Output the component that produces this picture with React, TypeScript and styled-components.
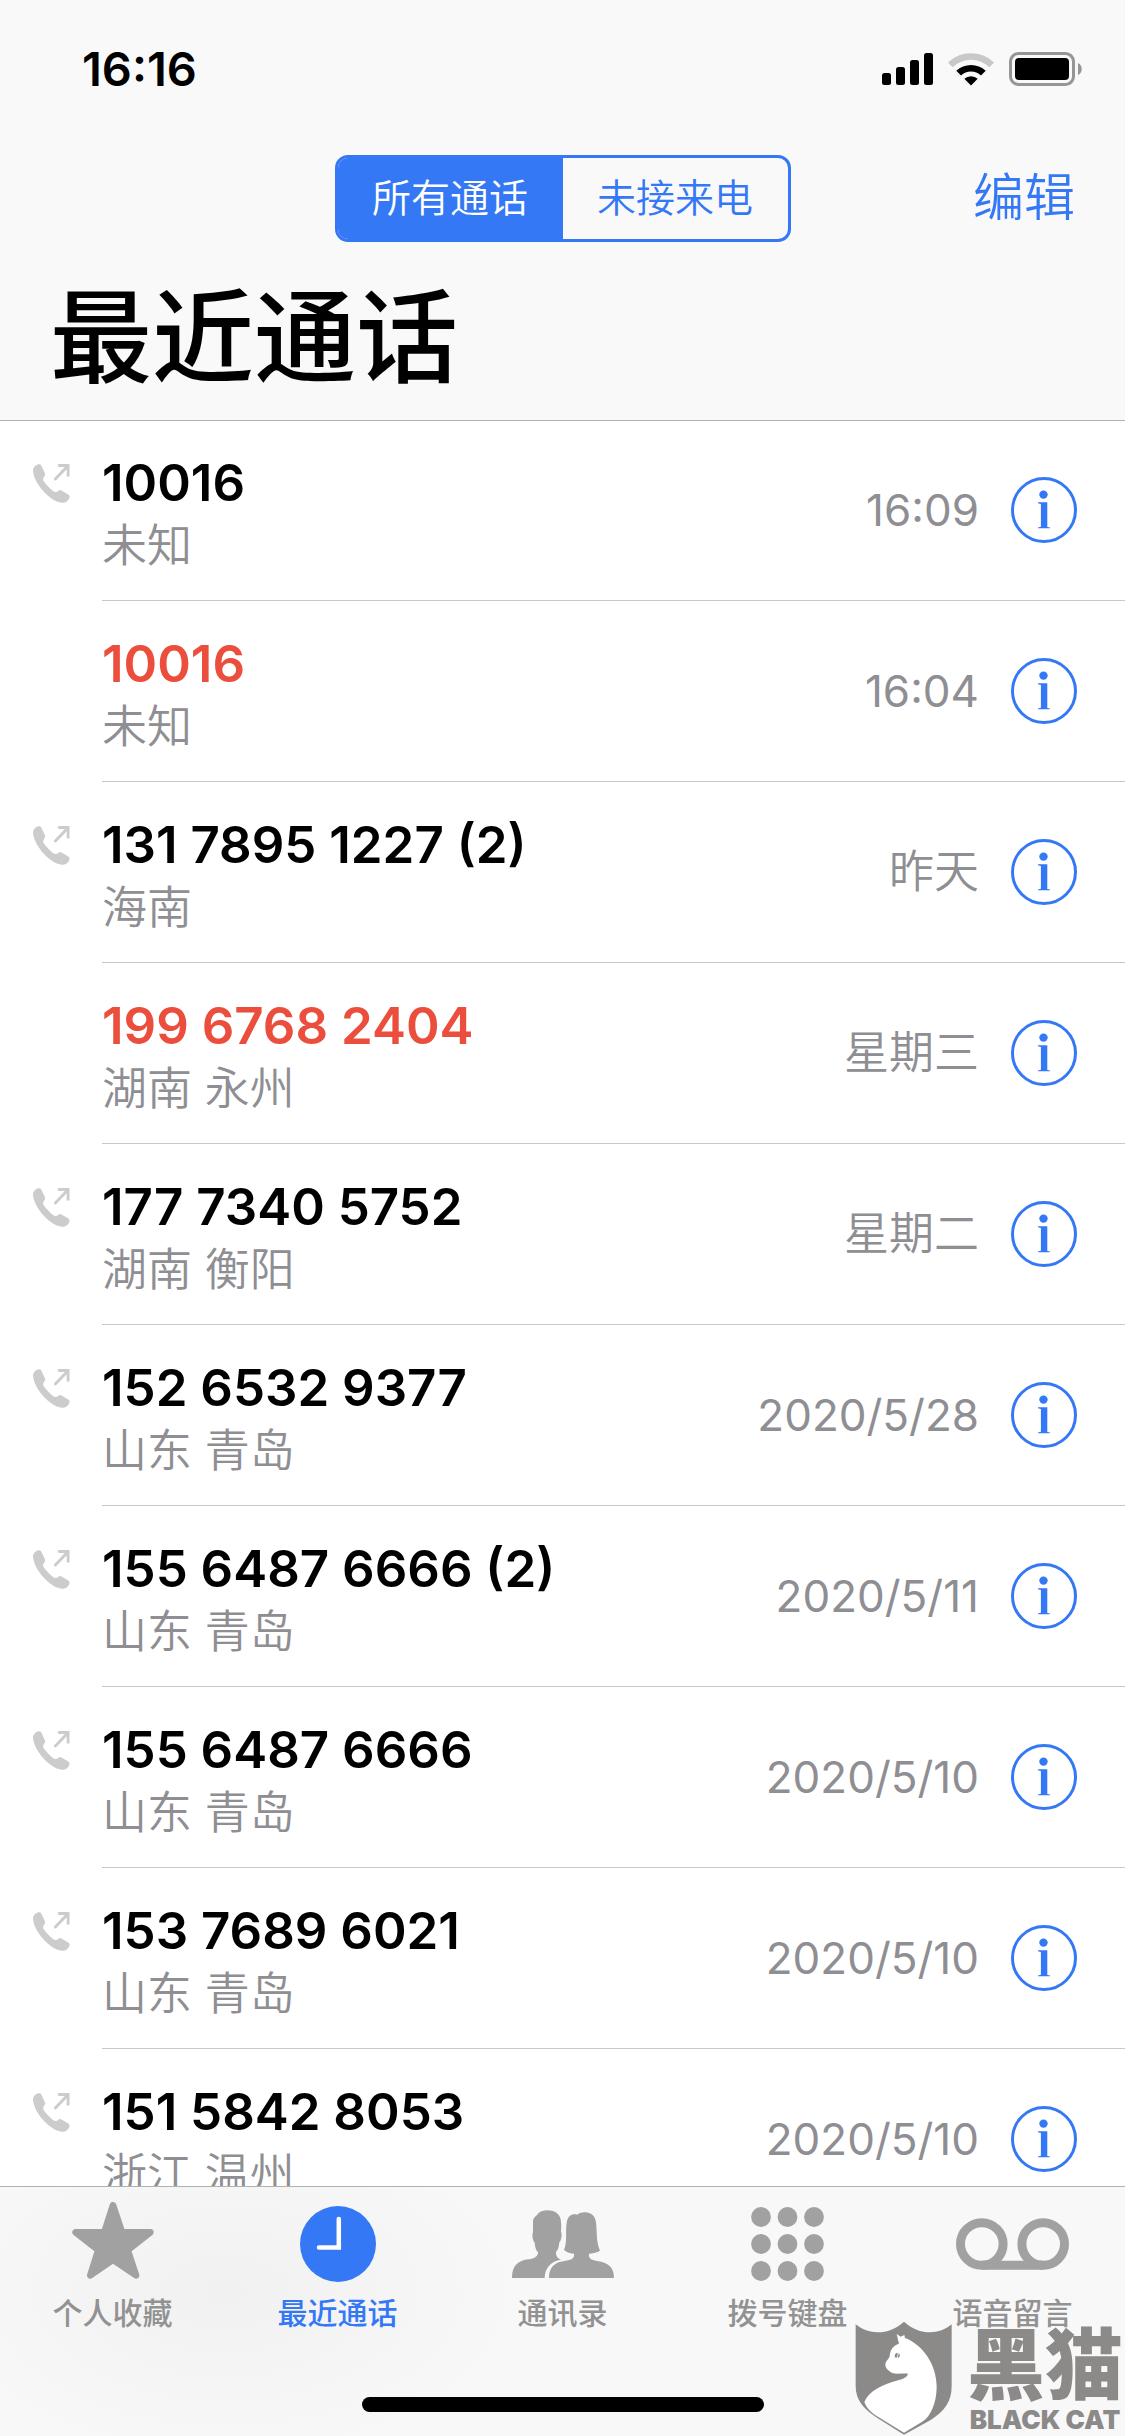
import React, { useState } from 'react';
import styled, { createGlobalStyle } from 'styled-components';

const BLUE = '#3478f6';
const GREY = '#8e8e93';
const TAB_GREY = '#929292';
const ICON_GREY = '#a1a1a1';

const GlobalStyle = createGlobalStyle`
  * { box-sizing: border-box; }
  body {
    margin: 0;
    background: #fff;
    font-family: Inter, "Noto Sans CJK SC", sans-serif;
    -webkit-font-smoothing: antialiased;
  }
  button { font: inherit; padding: 0; margin: 0; border: 0; background: none; color: inherit; cursor: pointer; }
`;

const Screen = styled.div`
  position: relative;
  display: flex;
  flex-direction: column;
  height: 100vh;
  overflow: hidden;
`;

const Header = styled.header`
  position: relative;
  display: flex;
  flex-direction: column;
  background: #f9f9f9;
  box-shadow: 0 1px 0 #b2b2b2;
`;

const StatusBar = styled.div`
  display: flex;
  align-items: center;
  justify-content: space-between;
  height: 138px;
  padding: 0 43px 0 82px;
`;

const Clock = styled.time`
  font-size: 47px;
  font-weight: 600;
  line-height: 54px;
`;

const StatusIcons = styled.div`
  display: flex;
  align-items: center;
  gap: 15px;
`;

const NavBar = styled.div`
  display: grid;
  grid-template-columns: 1fr auto 1fr;
  align-items: center;
  height: 120px;
  padding: 0 50px;
`;

const Segmented = styled.div`
  grid-column: 2;
  display: flex;
  width: 456px;
  height: 87px;
  border: 3px solid ${BLUE};
  border-radius: 13px;
  overflow: hidden;
`;

const Segment = styled.button<{ $active: boolean }>`
  flex: 1;
  && {
    font-size: 39px;
    font-weight: 350;
    line-height: 48px;
    color: ${p => (p.$active ? '#fff' : BLUE)};
    background: ${p => (p.$active ? BLUE : 'transparent')};
  }
`;

const EditButton = styled.button`
  justify-self: end;
  && {
    font-size: 51px;
    font-weight: 350;
    line-height: 60px;
    color: ${BLUE};
  }
`;

const Title = styled.h1`
  margin: 0;
  padding: 20px 50px 22px;
  font-size: 102px;
  font-weight: 500;
  line-height: 120px;
`;

const CallList = styled.ul`
  flex: 1;
  min-height: 0;
  margin: 0;
  padding: 0;
  list-style: none;
  overflow-y: auto;
  scrollbar-width: none;
`;

const Row = styled.li`
  display: flex;
  height: 181px;
`;

const Direction = styled.div`
  flex: none;
  width: 102px;
  padding: 44px 0 0 33px;
`;

const RowBody = styled.div`
  flex: 1;
  display: flex;
  align-items: center;
  border-bottom: 1px solid #c8c7cc;
  padding-right: 48px;
`;

const Caller = styled.div`
  flex: 1;
  min-width: 0;
  padding-top: 12px;
`;

const Phone = styled.div<{ $missed?: boolean }>`
  font-size: 51px;
  font-weight: 600;
  line-height: 60px;
  color: ${p => (p.$missed ? '#eb4e3d' : '#000')};
`;

const Place = styled.div`
  font-size: 45px;
  font-weight: 350;
  line-height: 66px;
  color: ${GREY};
`;

const When = styled.time<{ $numeric: boolean }>`
  margin-right: 32px;
  font-size: ${p => (p.$numeric ? 44 : 45)}px;
  font-weight: ${p => (p.$numeric ? 400 : 350)};
  line-height: 54px;
  color: ${GREY};
`;

const InfoButton = styled.button`
  display: flex;
`;

const TabBar = styled.nav`
  display: flex;
  flex: none;
  position: relative;
  height: 250px;
  border-top: 1px solid #b2b2b2;
  background:
    radial-gradient(ellipse 300px 170px at 20% 42%, #f1f1f1, rgba(241, 241, 241, 0)),
    #f8f8f8;
`;

const Tab = styled.button<{ $active: boolean }>`
  flex: 1;
  display: flex;
  flex-direction: column;
  align-items: center;
  height: 150px;
  && {
    font-size: 30px;
    font-weight: 500;
    line-height: 36px;
    color: ${p => (p.$active ? BLUE : TAB_GREY)};
  }
`;

const TabIcon = styled.span<{ $active: boolean }>`
  display: flex;
  align-items: center;
  justify-content: center;
  height: 108px;
  padding-top: 6px;
  color: ${p => (p.$active ? BLUE : ICON_GREY)};
`;

const HomeIndicator = styled.div`
  position: absolute;
  left: 50%;
  bottom: 24px;
  width: 402px;
  height: 15px;
  border-radius: 8px;
  background: #000;
  transform: translateX(-50%);
`;

const Watermark = styled.div`
  position: absolute;
  right: 2px;
  bottom: 0;
  display: flex;
  gap: 14px;
  color: #8c8989;
  pointer-events: none;
`;

const WatermarkText = styled.div`
  display: flex;
  flex-direction: column;
  align-items: center;
  gap: 8px;
`;

const WatermarkName = styled.span`
  font-family: "Noto Sans CJK SC", sans-serif;
  font-size: 78px;
  font-weight: 900;
  line-height: 78px;
`;

const WatermarkLatin = styled.span`
  font-size: 26px;
  font-weight: 900;
  line-height: 26px;
  white-space: nowrap;
`;

const SignalIcon = () => (
  <svg width="51" height="34" viewBox="0 0 51 34" aria-hidden="true">
    <rect x="0" y="21" width="9" height="12" rx="2.5" />
    <rect x="14" y="15" width="9" height="18" rx="2.5" />
    <rect x="28" y="8" width="9" height="25" rx="2.5" />
    <rect x="42" y="1" width="9" height="32" rx="2.5" />
  </svg>
);

const WifiIcon = () => (
  <svg width="46" height="34" viewBox="0 0 46 34" aria-hidden="true">
    <path d="M0 10.5a33 33 0 0 1 46 0l-4.600 4.700a26.500 26.500 0 0 0-36.800 0z" fill="#c8c8c8" />
    <path d="M8.300 18.800a21.200 21.200 0 0 1 29.400 0l-4.700 4.700a14.600 14.600 0 0 0-20 0z" />
    <path d="M16.300 26.800a9.800 9.800 0 0 1 13.400 0L23 33.500z" />
  </svg>
);

const BatteryIcon = () => (
  <svg width="73" height="34" viewBox="0 0 73 34" aria-hidden="true">
    <rect x="1.500" y="1.500" width="63" height="31" rx="8" fill="none" stroke="#969696" strokeWidth="3" />
    <rect x="6" y="6" width="54" height="22" rx="4" />
    <path d="M69 11c5 2 5 10 0 12z" fill="#969696" />
  </svg>
);

const OutgoingIcon = () => (
  <svg width="37" height="39" viewBox="0 0 37 39" fill="#ccc" role="img" aria-label="呼出">
    <path d="M5.500.3C3 .8.100 3.200 0 6.500.200 13 5.500 23 13.500 30.500 20 36.500 26 38.800 30 38.800c3.500 0 6.500-3 6.500-6.200 0-1-.4-1.500-1.200-2L28.500 26.400c-1.200-.7-2.200-.4-3 .4-1.600 1.600-3.600 1.700-5.200.5-3.600-2.800-6.800-6.300-9.600-10-.9-1.400-.7-3 .4-4.500 1-1.400 1.500-2.200.7-3.800L8.300 1.500C7.600.400 6.800 0 5.500.300z" />
    <path d="M26.200 0h10.300v12.600h-2.800V5.200L23.400 16c-1.500 1.300-3.400-.5-2.100-2L31.800 2.900h-5.600c-1.800 0-1.800-2.900 0-2.900z" />
  </svg>
);

const InfoIcon = () => (
  <svg width="66" height="66" viewBox="0 0 66 66" fill={BLUE} aria-hidden="true">
    <circle cx="33" cy="33" r="31.500" fill="none" stroke={BLUE} strokeWidth="3" />
    <circle cx="32.500" cy="17.600" r="4.200" />
    <path d="M27 25.300h9.300v24.600l2.700.5V51.300H27v-.9l2.900-.7V27l-2.900-.7z" />
  </svg>
);

const StarIcon = () => (
  <svg width="82" height="84" viewBox="33 36 246 252" fill="currentColor" stroke="currentColor" strokeWidth="20" strokeLinejoin="round" aria-hidden="true">
    <path d="M156 46 183 127H268L200 180 225 256 156 209 88 256 112 180 44 127H130z" />
  </svg>
);

const ClockIcon = () => (
  <svg width="76" height="76" viewBox="0 0 76 76" aria-hidden="true">
    <circle cx="38" cy="38" r="38" fill="currentColor" />
    <path d="M38.800 13v28.500H19" fill="none" stroke="#fff" strokeWidth="4.500" strokeLinecap="round" />
  </svg>
);

const PeopleIcon = () => (
  <svg width="102" height="68" viewBox="33 57 306 204" fill="currentColor" aria-hidden="true">
    <path d="M33 261C33 225 50 208 84 205C100 203 112 195 111 183C104 178 102 165 101 155C95 150 92 130 96 124L96 90C98 78 106 76 112 67C122 56 150 55 166 65C180 74 182 92 180 122C184 128 181 150 175 154C174 166 171 178 165 183C164 196 170 202 180 206C150 210 131 232 131 261Z" />
    <path d="M144 261C144 232 158 214 190 210C212 206 221 202 219 188C205 187 195 183 189 176C200 155 192 115 198 90C202 74 214 66 229 71C244 58 272 64 280 78C292 98 281 145 297 179C288 184 276 187 264 188C262 202 270 206 288 210C325 215 339 232 339 261Z" />
  </svg>
);

const KeypadIcon = () => (
  <svg width="73" height="78" viewBox="0 0 73 78" fill="currentColor" aria-hidden="true">
    {[12, 39, 66].map(y => [10, 36.500, 63].map(x => <circle key={`${x}-${y}`} cx={x} cy={y} r="9.900" />))}
  </svg>
);

const VoicemailIcon = () => (
  <svg width="113" height="52" viewBox="0 0 113 52" fill="none" stroke="currentColor" strokeWidth="9" aria-hidden="true">
    <circle cx="25.800" cy="26" r="21.300" />
    <circle cx="87.200" cy="26" r="21.300" />
    <path d="M26 47.300h61" />
  </svg>
);

const CatShield = () => (
  <svg width="98" height="115" viewBox="18 15 294 345" aria-hidden="true">
    <path d="M20 25C60 58 120 58 165 17C210 58 270 58 308 25V210C308 255 288 285 245 312L165 356L85 306C40 276 20 250 20 210Z" fill="currentColor" />
    <path d="M143 54L155 62L166 57L168 66C220 85 263 145 263 212C263 260 245 300 222 316L165 350L88 303C65 290 52 275 46 258C60 225 100 205 150 192C165 188 175 182 177 173C160 172 145 175 132 172C118 164 110 158 109 146C109 135 120 130 122 120C124 100 133 88 150 83Z" fill="#fff" />
    <path d="M145 110C136 112 135 122 141 126C146 122 147 116 145 110zM149 112C155 116 153 124 146 127" fill="currentColor" />
  </svg>
);

type Call = { phone: string; place: string; when: string; missed?: boolean };

const calls: Call[] = [
  { phone: '10016', place: '未知', when: '16:09' },
  { phone: '10016', place: '未知', when: '16:04', missed: true },
  { phone: '131 7895 1227 (2)', place: '海南', when: '昨天' },
  { phone: '199 6768 2404', place: '湖南 永州', when: '星期三', missed: true },
  { phone: '177 7340 5752', place: '湖南 衡阳', when: '星期二' },
  { phone: '152 6532 9377', place: '山东 青岛', when: '2020/5/28' },
  { phone: '155 6487 6666 (2)', place: '山东 青岛', when: '2020/5/11' },
  { phone: '155 6487 6666', place: '山东 青岛', when: '2020/5/10' },
  { phone: '153 7689 6021', place: '山东 青岛', when: '2020/5/10' },
  { phone: '151 5842 8053', place: '浙江 温州', when: '2020/5/10' },
];

const tabs = [
  { label: '个人收藏', Icon: StarIcon },
  { label: '最近通话', Icon: ClockIcon },
  { label: '通讯录', Icon: PeopleIcon },
  { label: '拨号键盘', Icon: KeypadIcon },
  { label: '语音留言', Icon: VoicemailIcon },
];

export default function App() {
  const [filter, setFilter] = useState(0);
  const [tab, setTab] = useState(1);
  const shown = filter === 1 ? calls.filter(c => c.missed) : calls;

  return (
    <>
      <GlobalStyle />
      <Screen>
        <Header>
          <StatusBar>
            <Clock>16:16</Clock>
            <StatusIcons>
              <SignalIcon />
              <WifiIcon />
              <BatteryIcon />
            </StatusIcons>
          </StatusBar>
          <NavBar>
            <Segmented role="group" aria-label="通话筛选">
              {['所有通话', '未接来电'].map((label, i) => (
                <Segment key={label} $active={filter === i} aria-pressed={filter === i} onClick={() => setFilter(i)}>
                  {label}
                </Segment>
              ))}
            </Segmented>
            <EditButton>编辑</EditButton>
          </NavBar>
          <Title>最近通话</Title>
        </Header>
        <CallList>
          {shown.map((call, i) => (
            <Row key={i}>
              <Direction>{!call.missed && <OutgoingIcon />}</Direction>
              <RowBody>
                <Caller>
                  <Phone $missed={call.missed}>{call.phone}</Phone>
                  <Place>{call.place}</Place>
                </Caller>
                <When $numeric={/\d/.test(call.when)}>{call.when}</When>
                <InfoButton aria-label="详情">
                  <InfoIcon />
                </InfoButton>
              </RowBody>
            </Row>
          ))}
        </CallList>
        <TabBar>
          {tabs.map(({ label, Icon }, i) => (
            <Tab key={label} $active={tab === i} onClick={() => setTab(i)}>
              <TabIcon $active={tab === i}>
                <Icon />
              </TabIcon>
              {label}
            </Tab>
          ))}
          <HomeIndicator />
        </TabBar>
        <Watermark>
          <CatShield />
          <WatermarkText>
            <WatermarkName>黑猫</WatermarkName>
            <WatermarkLatin>BLACK CAT</WatermarkLatin>
          </WatermarkText>
        </Watermark>
      </Screen>
    </>
  );
}
